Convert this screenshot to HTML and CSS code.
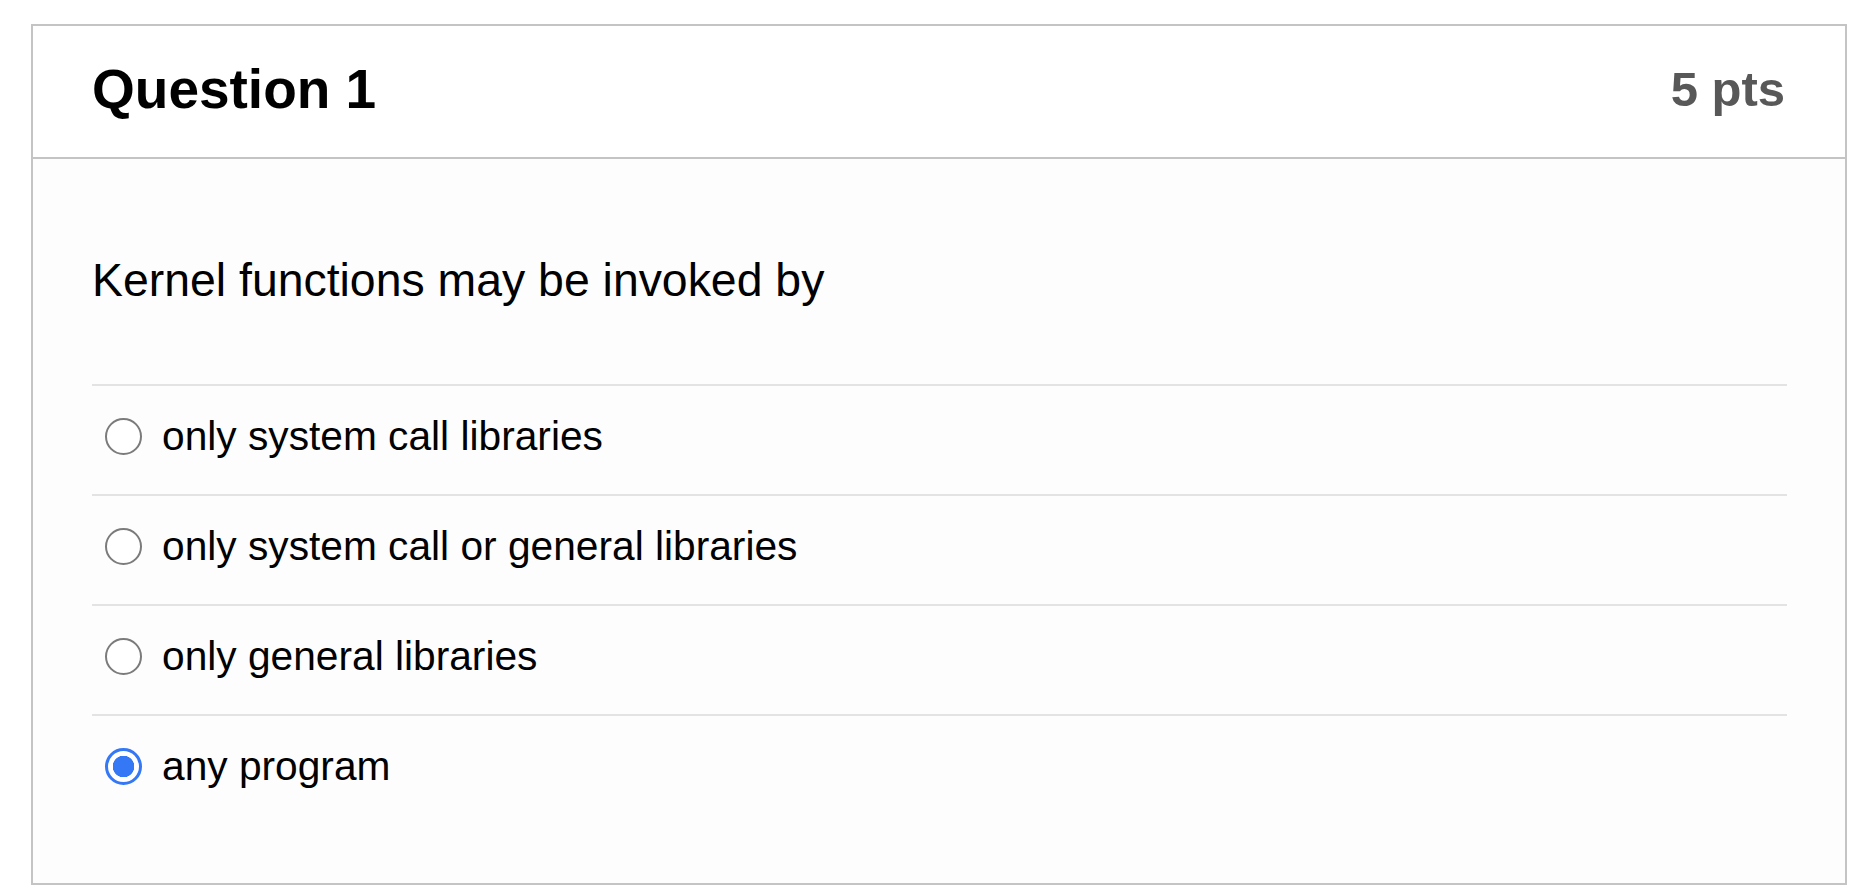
FILE: index.html
```html
<!DOCTYPE html>
<html lang="en">
<head>
<meta charset="utf-8">
<title>Question 1</title>
<link rel="stylesheet" href="styles.css">
</head>
<body>
<div class="page">
  <section class="card">
    <header class="card-header">
      <h2 class="title">Question 1</h2>
      <span class="points">5 pts</span>
    </header>
    <div class="card-body">
      <p class="question">Kernel functions may be invoked by</p>
      <ul class="answers">
        <li class="answer"><span class="radio"></span><span class="label">only system call libraries</span></li>
        <li class="answer"><span class="radio"></span><span class="label">only system call or general libraries</span></li>
        <li class="answer"><span class="radio"></span><span class="label">only general libraries</span></li>
        <li class="answer"><span class="radio checked"></span><span class="label">any program</span></li>
      </ul>
    </div>
  </section>
</div>
</body>
</html>
```

FILE: styles.css
```css
html, body {
  margin: 0;
  padding: 0;
  background: #ffffff;
}

body {
  font-family: "Liberation Sans", Arial, Helvetica, sans-serif;
  color: #000;
}

.page {
  padding: 24px 11px 0 31px;
}

.card {
  border: 2px solid #c4c4c4;
  background: #fdfdfd;
  box-sizing: border-box;
  width: 1816px;
  height: 861px;
  display: flex;
  flex-direction: column;
}

.card-header {
  background: #ffffff;
  border-bottom: 2px solid #c4c4c4;
  height: 126px;
  box-sizing: content-box;
  display: flex;
  align-items: center;
  justify-content: space-between;
  padding: 0 60px 5px 59px;
}

.title {
  margin: 0;
  font-size: 55px;
  font-weight: 700;
  line-height: 1;
  color: #000;
}

.points {
  font-size: 49px;
  font-weight: 700;
  line-height: 1;
  color: #585858;
}

.card-body {
  flex: 1;
  padding: 95px 58px 0 59px;
}

.question {
  margin: 0 0 77px 0;
  font-size: 46.4px;
  line-height: 53px;
  height: 53px;
}

.answers {
  list-style: none;
  margin: 0;
  padding: 0;
}

.answer {
  border-top: 2px solid #e3e3e3;
  height: 110px;
  display: flex;
  align-items: center;
  padding: 0 0 8px 0;
  box-sizing: border-box;
}

.radio {
  width: 37px;
  height: 37px;
  box-sizing: border-box;
  border: 2.5px solid #7b7b7b;
  border-radius: 50%;
  margin-left: 13px;
  margin-right: 20px;
  flex: none;
  background: #fff;
}

.radio.checked {
  border: 3px solid #3478f6;
  background: radial-gradient(circle, #3478f6 0 10.5px, #ffffff 11px);
}

.label {
  font-size: 40.7px;
  line-height: 46px;
}
```
